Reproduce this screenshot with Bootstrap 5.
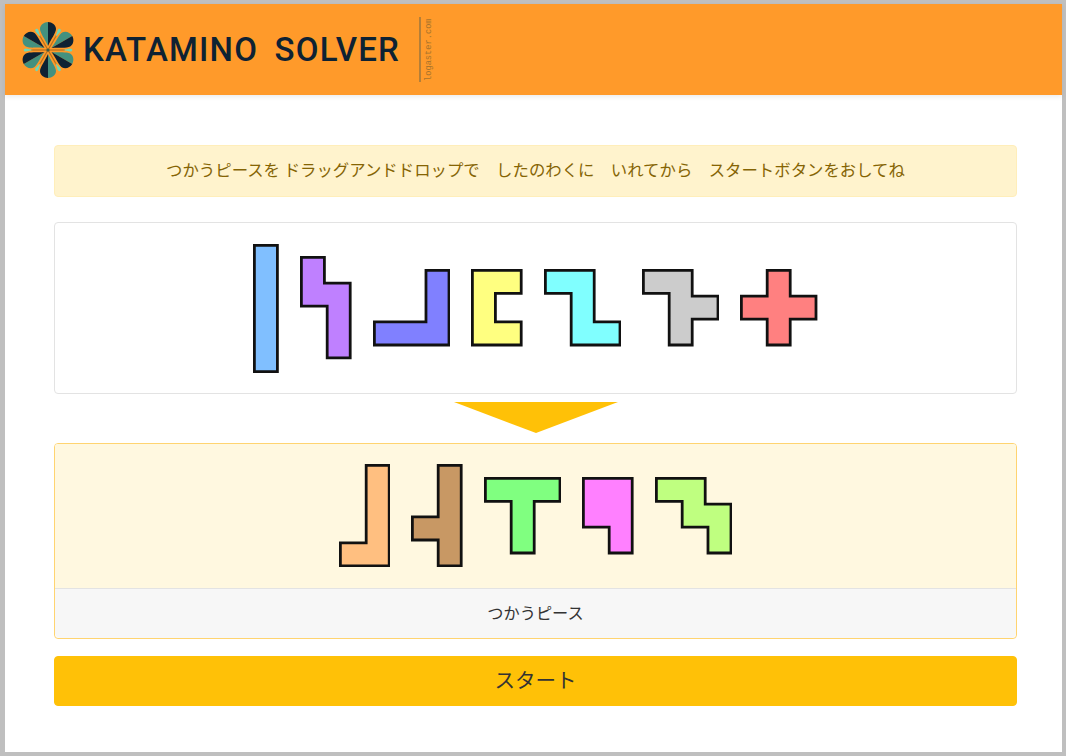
<!DOCTYPE html>
<html lang="ja">
<head>
<meta charset="utf-8">
<title>Katamino Solver</title>
<link href="https://cdn.jsdelivr.net/npm/bootstrap@5.3.0/dist/css/bootstrap.min.css" rel="stylesheet">
<style>
html,body{height:100%;}
body{margin:0;background:#fff;font-family:"Liberation Sans","Noto Sans CJK JP",sans-serif;overflow:hidden;}
.km-frame{height:756px;border:solid #bfbfbf;border-width:4px 4px 4px 5px;background:#fff;}
.km-header{height:91px;background:#ff9a2a;box-shadow:0 2px 5px rgba(0,0,0,.08);padding-left:15px;}
.km-logotext{font-family:Roboto,sans-serif;font-weight:500;font-size:33px;letter-spacing:1.2px;word-spacing:7px;color:#0e2233;line-height:1;white-space:pre;margin-left:7px;}
.km-mark{border-left:2px solid #b57f38;height:65px;margin-left:19px;}
.km-mark-text{font-family:"Liberation Mono",monospace;font-size:8.7px;line-height:1;color:#a8742c;writing-mode:vertical-rl;transform:rotate(180deg);text-align:center;height:65px;margin-left:4px;}
.km-main{padding:50px 45px 0 49px;}
.km-alert{height:52px;margin-bottom:25px;padding:0 0 3px;background:#fff3cd;border-color:#ffeeba;color:#856404;font-size:16.4px;font-family:"Noto Sans CJK JP",sans-serif;border-radius:4px;}
.km-card{border-color:#e3e3e3;border-radius:4px;}
.km-pieces{padding:20.5px;gap:21px;}
.km-pieces-b{padding:19.5px 20px 21.3px;gap:21px;background:#fff8e0;}
.km-low{margin-top:2px;}
.km-arrow{width:0;height:0;border-style:solid;border-width:31px 82px 0 82px;border-color:#ffc107 transparent transparent transparent;margin:8px auto 10px;}
.km-zone{border-color:#ffd470;border-radius:4px;overflow:hidden;}
.km-foot{background:#f7f7f7;border-top-color:#e3e3e3;color:#333;font-family:"Noto Sans CJK JP",sans-serif;font-size:16.2px;padding:11.5px 12.5px 13.5px;line-height:24px;}
.km-start{display:block;width:100%;height:50px;margin-top:17px;border-radius:4px;background:#ffc107;border-color:#ffc107;color:#333;font-family:"Noto Sans CJK JP",sans-serif;font-size:20.5px;padding:0 0 4px;}
.km-p{stroke:#111;stroke-width:2.8;stroke-linejoin:miter;display:block;flex:none;}
</style>
</head>
<body>
<div class="km-frame">
  <header class="km-header d-flex align-items-center">
    <svg width="56" height="56" viewBox="-28 -28 56 56" aria-label="logo">
      <defs>
        <g id="km-petal">
          <path d="M0-4C-3-11-8-17-8-21C-8-25-4-28 0-28Z" fill="#43917f"/>
          <path d="M0-4C3-11 8-17 8-21C8-25 4-28 0-28Z" fill="#0e2233"/>
        </g>
        <g id="km-spike">
          <line x1="0" y1="0" x2="0" y2="-17" stroke="#b5701f" stroke-width="1.2"/>
          <path d="M0-15L1.6-22C1.6-25-1.6-25-1.6-22Z" fill="#6fd8b8"/>
        </g>
      </defs>
      <use href="#km-spike" transform="rotate(30)"/><use href="#km-spike" transform="rotate(90)"/><use href="#km-spike" transform="rotate(150)"/><use href="#km-spike" transform="rotate(210)"/><use href="#km-spike" transform="rotate(270)"/><use href="#km-spike" transform="rotate(330)"/>
      <use href="#km-petal"/><use href="#km-petal" transform="rotate(60)"/><use href="#km-petal" transform="rotate(120)"/><use href="#km-petal" transform="rotate(180)"/><use href="#km-petal" transform="rotate(240)"/><use href="#km-petal" transform="rotate(300)"/>
      <circle r="1.6" fill="#3c5c46"/>
    </svg>
    <span class="km-logotext">KATAMINO SOLVER</span>
    <span class="km-mark"></span>
    <span class="km-mark-text">logaster.com</span>
  </header>
  <main class="km-main">
    <div class="alert alert-warning km-alert d-flex align-items-center justify-content-center" role="alert">つかうピースを ドラッグアンドドロップで　したのわくに　いれてから　スタートボタンをおしてね</div>
    <div class="card km-card">
      <div class="card-body km-pieces d-flex justify-content-center align-items-center">
        <svg class="km-p" width="25.8" height="129" viewBox="0 0 26 130"><polygon fill="#80bfff" points="1.4,1.4 24.6,1.4 24.6,128.6 1.4,128.6"/></svg>
        <svg class="km-p" width="51.6" height="103.2" viewBox="0 0 52 104"><polygon fill="#bf80ff" points="1.4,1.4 24.6,1.4 24.6,27.4 50.6,27.4 50.6,102.6 27.4,102.6 27.4,50.6 1.4,50.6"/></svg>
        <svg class="km-p" width="77.4" height="77.4" viewBox="0 0 78 78"><polygon fill="#8080ff" points="53.4,1.4 76.6,1.4 76.6,76.6 1.4,76.6 1.4,53.4 53.4,53.4"/></svg>
        <svg class="km-p" width="51.6" height="77.4" viewBox="0 0 52 78"><polygon fill="#ffff80" points="1.4,1.4 50.6,1.4 50.6,24.6 24.6,24.6 24.6,53.4 50.6,53.4 50.6,76.6 1.4,76.6"/></svg>
        <svg class="km-p" width="77.4" height="77.4" viewBox="0 0 78 78"><polygon fill="#80ffff" points="1.4,1.4 50.6,1.4 50.6,53.4 76.6,53.4 76.6,76.6 27.4,76.6 27.4,24.6 1.4,24.6"/></svg>
        <svg class="km-p" width="77.4" height="77.4" viewBox="0 0 78 78"><polygon fill="#cccccc" points="1.4,1.4 50.6,1.4 50.6,27.4 76.6,27.4 76.6,50.6 50.6,50.6 50.6,76.6 27.4,76.6 27.4,24.6 1.4,24.6"/></svg>
        <svg class="km-p" width="77.4" height="77.4" viewBox="0 0 78 78"><polygon fill="#ff8080" points="27.4,1.4 50.6,1.4 50.6,27.4 76.6,27.4 76.6,50.6 50.6,50.6 50.6,76.6 27.4,76.6 27.4,50.6 1.4,50.6 1.4,27.4 27.4,27.4"/></svg>
      </div>
    </div>
    <div class="km-arrow"></div>
    <div class="card km-zone">
      <div class="card-body km-pieces-b d-flex justify-content-center align-items-center">
        <svg class="km-p" width="51.6" height="103.2" viewBox="0 0 52 104"><polygon fill="#ffbf80" points="27.4,1.4 50.6,1.4 50.6,102.6 1.4,102.6 1.4,79.4 27.4,79.4"/></svg>
        <svg class="km-p" width="51.6" height="103.2" viewBox="0 0 52 104"><polygon fill="#c89864" points="27.4,1.4 50.6,1.4 50.6,102.6 27.4,102.6 27.4,76.6 1.4,76.6 1.4,53.4 27.4,53.4"/></svg>
        <svg class="km-p km-low" width="77.4" height="77.4" viewBox="0 0 78 78"><polygon fill="#80ff80" points="1.4,1.4 76.6,1.4 76.6,24.6 50.6,24.6 50.6,76.6 27.4,76.6 27.4,24.6 1.4,24.6"/></svg>
        <svg class="km-p km-low" width="51.6" height="77.4" viewBox="0 0 52 78"><polygon fill="#ff80ff" points="1.4,1.4 50.6,1.4 50.6,76.6 27.4,76.6 27.4,50.6 1.4,50.6"/></svg>
        <svg class="km-p km-low" width="77.4" height="77.4" viewBox="0 0 78 78"><polygon fill="#bfff80" points="1.4,1.4 50.6,1.4 50.6,27.4 76.6,27.4 76.6,76.6 53.4,76.6 53.4,50.6 27.4,50.6 27.4,24.6 1.4,24.6"/></svg>
      </div>
      <div class="card-footer km-foot text-center">つかうピース</div>
    </div>
    <button type="button" class="btn btn-warning km-start">スタート</button>
  </main>
</div>
<script src="https://cdn.jsdelivr.net/npm/bootstrap@5.3.0/dist/js/bootstrap.bundle.min.js"></script>
</body>
</html>
